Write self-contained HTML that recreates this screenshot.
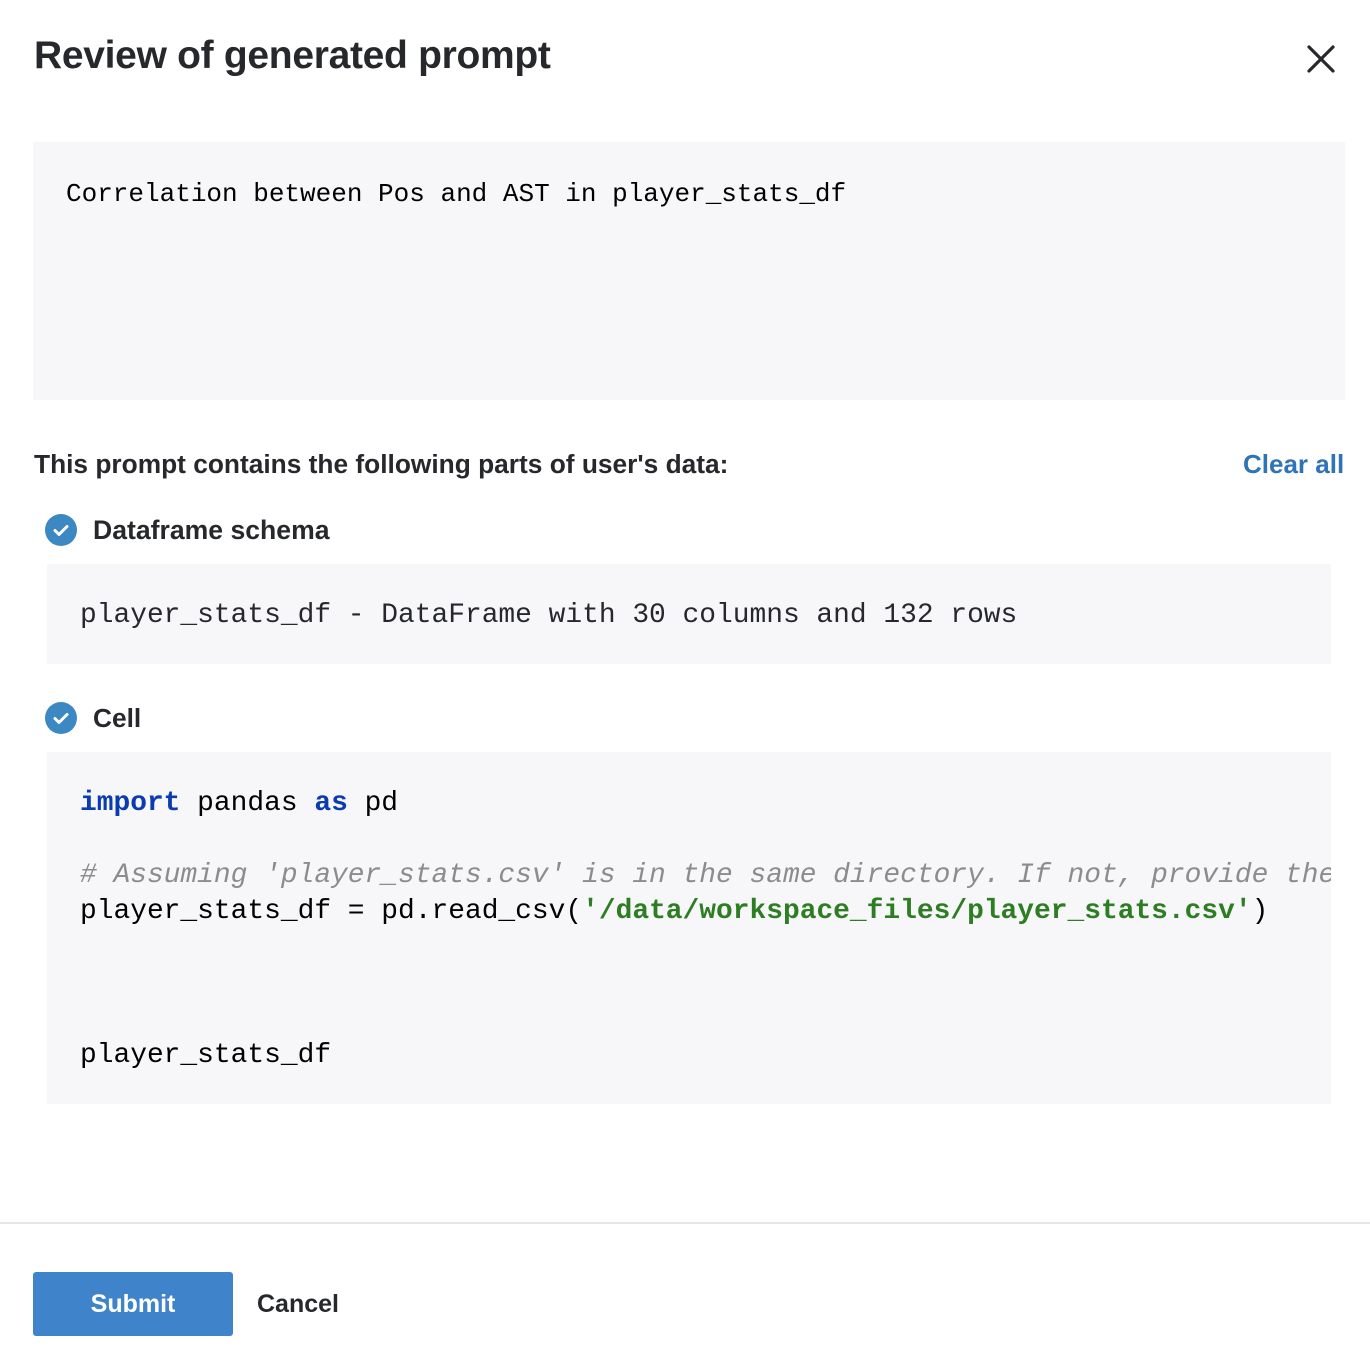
<!DOCTYPE html>
<html><head><meta charset="utf-8"><style>
*{margin:0;padding:0;box-sizing:border-box}
body{width:1370px;height:1356px;background:#fff;font-family:"Liberation Sans",sans-serif;color:#27282c;position:relative;overflow:hidden}
.abs{position:absolute}
.mono{font-family:"Liberation Mono",monospace;white-space:pre}
h1{position:absolute;left:34px;top:34px;font-size:39px;font-weight:bold;color:#27282c;letter-spacing:-0.3px}
.box{position:absolute;background:#f7f7f9}
.chk{position:absolute;width:32px;height:32px;border-radius:50%;background:#3b88c3}
.lbl{position:absolute;font-size:26.3px;font-weight:bold;color:#27282c}
</style></head><body>
<h1>Review of generated prompt</h1>
<svg class="abs" style="left:1306px;top:44px" width="30" height="30" viewBox="0 0 30 30"><path d="M3 3L27 27M27 3L3 27" stroke="#27282c" stroke-width="3.2" stroke-linecap="round"/></svg>
<div class="box" style="left:33px;top:142px;width:1312px;height:258px"></div>
<div class="abs mono" style="left:66px;top:179px;font-size:26px;color:#000">Correlation between Pos and AST in player_stats_df</div>
<div class="lbl" style="left:34px;top:449px">This prompt contains the following parts of user's data:</div>
<div class="abs" style="left:1243px;top:449px;font-size:26px;font-weight:bold;color:#2f73b8">Clear all</div>
<div class="chk" style="left:45px;top:514px"><svg width="32" height="32"><path d="M10 16.5l4 4 8-8" stroke="#fff" stroke-width="3" fill="none" stroke-linecap="round" stroke-linejoin="round"/></svg></div>
<div class="lbl" style="left:93px;top:515px;font-size:26.6px">Dataframe schema</div>
<div class="box" style="left:47px;top:564px;width:1284px;height:100px"></div>
<div class="abs mono" style="left:80px;top:600px;font-size:27.9px;color:#27282c">player_stats_df - DataFrame with 30 columns and 132 rows</div>
<div class="chk" style="left:45px;top:702px"><svg width="32" height="32"><path d="M10 16.5l4 4 8-8" stroke="#fff" stroke-width="3" fill="none" stroke-linecap="round" stroke-linejoin="round"/></svg></div>
<div class="lbl" style="left:93px;top:703px">Cell</div>
<div class="box" style="left:47px;top:752px;width:1284px;height:352px;overflow:hidden">
<div class="abs mono" style="left:33px;top:34px;font-size:27.9px;line-height:36px;color:#000"><span style="color:#0b3bb0;font-weight:bold">import</span> pandas <span style="color:#0b3bb0;font-weight:bold">as</span> pd

<span style="color:#8c8c8c;font-style:italic"># Assuming 'player_stats.csv' is in the same directory. If not, provide the full path</span>
player_stats_df = pd.read_csv(<span style="color:#2d7d22;font-weight:bold">'/data/workspace_files/player_stats.csv'</span>)



player_stats_df</div></div>
<div class="abs" style="left:0;top:1222px;width:1370px;height:2px;background:#e6e6e8"></div>
<div class="abs" style="left:33px;top:1272px;width:200px;height:64px;background:#3f84cb;border-radius:3px;color:#fff;font-size:25px;font-weight:bold;text-align:center;line-height:64px">Submit</div>
<div class="abs" style="left:257px;top:1272px;line-height:64px;font-size:25px;font-weight:bold;color:#27282c">Cancel</div>
</body></html>
